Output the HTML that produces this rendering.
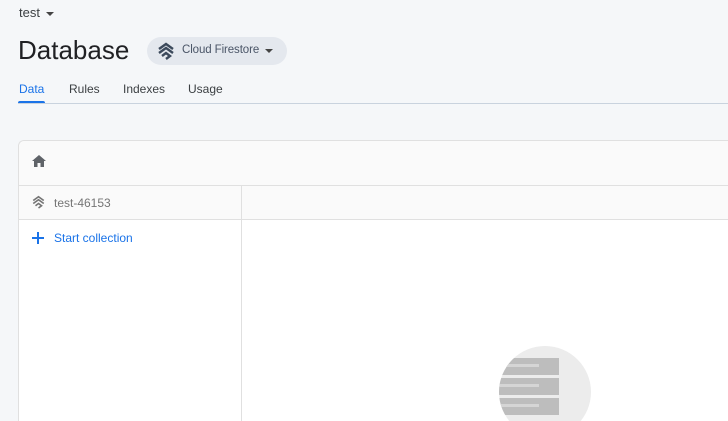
<!DOCTYPE html>
<html style="overflow:hidden;height:421px"><head><style>
body{margin:0;width:728px;height:421px;overflow:hidden;background:#f5f7f9;font-family:"Liberation Sans",sans-serif;position:relative}
.a{position:absolute}
</style></head><body>
<div class="a" style="left:19px;top:5px;font-size:13px;color:#3c4043">test</div>
<div class="a" style="left:46px;top:12px;border-left:4px solid transparent;border-right:4px solid transparent;border-top:4px solid #444"></div>
<div class="a" style="left:18px;top:35px;font-size:26px;color:#202124">Database</div>
<div class="a" style="left:147px;top:37px;width:140px;height:28px;border-radius:14px;background:#e4e8ee"></div>
<svg class="a" style="left:156px;top:42px" width="20" height="18" viewBox="0 0 20 18"><path d="M3 7 L10 2 L17 7 M3 11 L10 6 L17 11 M6 14 L10 11 L14 14 L10 17" fill="none" stroke="#3c4a5c" stroke-width="2.4"/></svg>
<div class="a" style="left:182px;top:44px;font-size:11.5px;color:#4a5567;letter-spacing:-0.1px">Cloud Firestore</div>
<div class="a" style="left:265px;top:49px;border-left:4px solid transparent;border-right:4px solid transparent;border-top:4px solid #444"></div>
<div class="a" style="left:19px;top:82px;font-size:12px;color:#1a73e8">Data</div>
<div class="a" style="left:69px;top:82px;font-size:12px;color:#3c4043">Rules</div>
<div class="a" style="left:123px;top:82px;font-size:12px;color:#3c4043">Indexes</div>
<div class="a" style="left:188px;top:82px;font-size:12px;color:#3c4043">Usage</div>
<div class="a" style="left:18px;top:101px;width:27px;height:3px;background:#1a73e8;border-radius:2px 2px 0 0"></div>
<div class="a" style="left:18px;top:103px;width:710px;height:1px;background:#c9d3de"></div>
<div class="a" style="left:18px;top:140px;width:710px;height:281px;background:#fff;border:1px solid #e0e0e0;border-right:none;border-bottom:none;border-radius:6px 0 0 0;box-sizing:border-box"></div>
<div class="a" style="left:19px;top:141px;width:709px;height:44px;background:#fafafa;border-radius:6px 0 0 0"></div>
<svg class="a" style="left:31px;top:154px" width="16" height="14" viewBox="0 0 16 14"><path d="M8 1 L1 7 H3 V13 H6.5 V9 H9.5 V13 H13 V7 H15 Z" fill="#5f6368"/></svg>
<div class="a" style="left:19px;top:185px;width:709px;height:1px;background:#e0e0e0"></div>
<div class="a" style="left:19px;top:186px;width:709px;height:33px;background:#fafafa"></div>
<div class="a" style="left:19px;top:219px;width:709px;height:1px;background:#e0e0e0"></div>
<div class="a" style="left:241px;top:185px;width:1px;height:236px;background:#e0e0e0"></div>
<svg class="a" style="left:31px;top:195px" width="15" height="14" viewBox="0 0 20 18"><path d="M3 7 L10 2 L17 7 M3 11 L10 6 L17 11 M6 14 L10 11 L14 14 L10 17" fill="none" stroke="#757575" stroke-width="2.2"/></svg>
<div class="a" style="left:54px;top:196px;font-size:12px;color:#757575">test-46153</div>
<div class="a" style="left:32px;top:237px;width:12px;height:1.6px;background:#1a73e8"></div>
<div class="a" style="left:37.2px;top:231.5px;width:1.6px;height:12px;background:#1a73e8"></div>
<div class="a" style="left:54px;top:231px;font-size:12px;color:#1a73e8">Start collection</div>
<div class="a" style="left:499px;top:346px;width:92px;height:75px;overflow:hidden">
<div class="a" style="left:0;top:0;width:92px;height:92px;border-radius:50%;background:#ececec;overflow:hidden">
<div class="a" style="left:0;top:12px;width:60px;height:17px;background:#bdbdbd"></div>
<div class="a" style="left:0;top:32px;width:60px;height:17px;background:#bdbdbd"></div>
<div class="a" style="left:0;top:52px;width:60px;height:17px;background:#bdbdbd"></div>
<div class="a" style="left:0;top:18px;width:40px;height:3px;background:#d5d5d5"></div>
<div class="a" style="left:0;top:38px;width:40px;height:3px;background:#d5d5d5"></div>
<div class="a" style="left:0;top:58px;width:40px;height:3px;background:#d5d5d5"></div>
</div></div>
</body></html>
